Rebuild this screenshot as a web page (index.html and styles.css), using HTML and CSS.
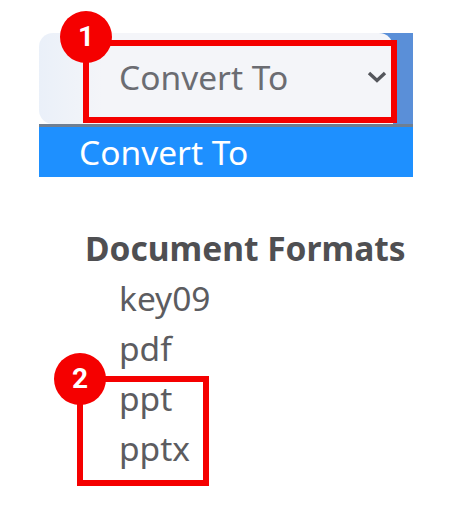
FILE: index.html
```html
<!DOCTYPE html>
<html>
<head>
  <meta charset="UTF-8">
  <link rel="stylesheet" href="styles.css">
</head>
<body>

  <div class="convert-box">
    <div class="select-back">
      <div class="select-bar">
        <span class="select-label">Convert To</span>
        <svg class="select-arrow" width="20" height="12" viewBox="0 0 20 12">
          <path d="M2 2 L10 9.5 L18 2" fill="none" stroke="#54565c" stroke-width="3.4"/>
        </svg>
      </div>
    </div>
    <div class="select-option">Convert To</div>
    <div class="mark mark-select"></div>
    <div class="badge badge-one">1</div>
  </div>

  <div class="format-list">
    <div class="format-title">Document Formats</div>
    <div class="format-item">key09</div>
    <div class="format-item">pdf</div>
    <div class="format-item">ppt</div>
    <div class="format-item">pptx</div>
    <div class="mark mark-formats"></div>
    <div class="badge badge-two">2</div>
  </div>

</body>
</html>
```

FILE: styles.css
```css
body {
  margin: 0;
  min-height: 512px;
  background: #fff;
  font-family: "Noto Sans", "Open Sans", sans-serif;
  color: #5c5c60;
}

.convert-box {
  position: relative;
  width: 374px;
  margin: 33px 0 0 39px;
}

.select-back {
  background: linear-gradient(to right, #fff 50%, #5a8fd8 50%);
  border-bottom: 3px solid #6f7f92;
}

.select-bar {
  display: flex;
  align-items: center;
  justify-content: space-between;
  height: 91px;
  margin-right: 20px;
  padding: 0 6px 4px 80px;
  box-sizing: border-box;
  background: linear-gradient(to right, #eaf0f9, #f4f5f9 18%);
  border-radius: 14px 14px 0 14px;
}

.select-label {
  font-size: 33.5px;
  color: #6b6c72;
}

.select-option {
  height: 50px;
  padding-left: 40px;
  background: #1e90ff;
  color: #fff;
  font-size: 33.5px;
  line-height: 50px;
}

.format-list {
  position: relative;
  margin: 46px 0 0 85px;
}

.format-title {
  font-size: 33.5px;
  font-weight: bold;
  line-height: 50px;
  color: #4f4f52;
}

.format-item {
  padding-left: 34px;
  font-size: 33.5px;
  line-height: 50px;
}

/* annotations */
.mark {
  position: absolute;
  box-sizing: border-box;
  border: 6px solid #f50000;
}

.mark-select {
  left: 44px;
  top: 7px;
  width: 314px;
  height: 83px;
}

.mark-formats {
  left: -8px;
  top: 153px;
  width: 132px;
  height: 110px;
}

.badge {
  position: absolute;
  width: 52px;
  height: 52px;
  border-radius: 50%;
  background: #f50000;
  color: #fff;
  font-family: "Roboto", sans-serif;
  font-size: 28px;
  font-weight: bold;
  line-height: 52px;
  text-align: center;
}

.badge-one {
  left: 21px;
  top: -22px;
}

.badge-two {
  left: -31px;
  top: 130px;
}
```
